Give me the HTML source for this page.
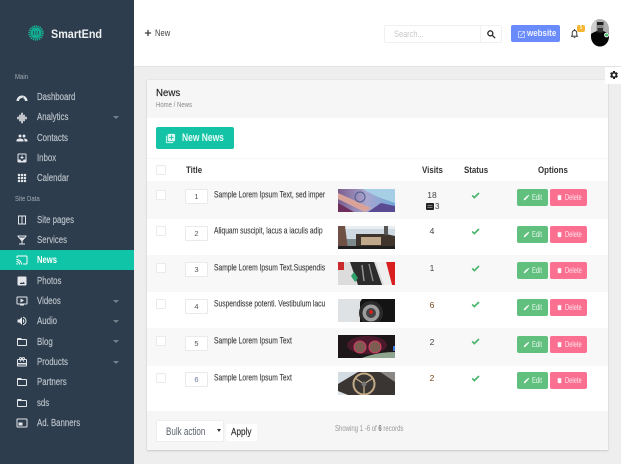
<!DOCTYPE html>
<html><head><meta charset="utf-8"><title>SmartEnd News</title>
<style>
html,body{margin:0;padding:0}
body{width:621px;height:464px;overflow:hidden;position:relative;background:#eee;font-family:"Liberation Sans",sans-serif}
div,span,svg{position:absolute;box-sizing:border-box}
.t{white-space:nowrap;transform-origin:0 50%;line-height:12px;height:12px}
.m{font-size:9.8px;color:#bcc4cb;left:37px;transform:translateY(1px) scaleX(.8);-webkit-text-stroke:.15px #bcc4cb}
.h{font-size:7.5px;color:#a3adb6;left:15px;transform:scaleX(.8)}
.i{fill:#e4e7ea;left:15.5px;width:12px;height:12px;margin-top:.5px}
.ar{left:113px;width:0;height:0;border:3px solid transparent;border-top:3px solid #75818d;border-bottom:0}
.row{left:147px;width:461px}
.s{background:#f8f8f8}
.cb{left:156px;width:10px;height:10px;background:#fff;border:1px solid #ebebeb;border-radius:1px}
.n{left:185px;width:23px;height:15px;background:#fff;border:1px solid #eaeaea;border-radius:1px;font-size:7.5px;color:#555;text-align:center;line-height:14px}
.ti{left:214px;font-size:9.6px;color:#3a3a3a;transform:translateY(.5px) scaleX(.7);-webkit-text-stroke:.12px #3a3a3a}
.th{left:338px;width:57px;height:23px}
.v{font-size:8.5px;color:#444;text-align:center;width:30px;left:417px;line-height:10px}
.ck{left:471px;width:9px;height:9px;fill:#46b56a}
.e{left:517px;width:31px;height:17px;background:#61c07e;border-radius:2px}
.d{left:550px;width:37px;height:17px;background:#fb6f91;border-radius:2px}
.bt{font-size:8.5px;color:#e9f7ee;transform:scaleX(.68);line-height:17px;height:17px}
.hd{font-size:9.2px;font-weight:bold;color:#333;top:164px;transform:scaleX(.86)}
</style></head>
<body>
<div style="left:0;top:0;width:134px;height:464px;background:#2e3d4d"></div>
<div style="left:134px;top:0;width:487px;height:67px;background:#fff;border-bottom:1px solid #e2e2e2"></div>

<svg style="left:28px;top:25px;width:16px;height:16px" viewBox="0 0 16 16"><circle cx="8" cy="8" r="6.8" fill="none" stroke="#16b89c" stroke-width="1.7" stroke-dasharray="1.3 .8"/><circle cx="8" cy="8" r="5.6" fill="#12ab92"/><path d="M5.5 6v4M8 6v4M10.5 6v4" stroke="#2b5a60" stroke-width=".9"/></svg>
<div class="t" style="left:51px;top:27.5px;font-size:12px;font-weight:bold;color:#eef0f2;transform:scaleX(.9)">SmartEnd</div>

<div class="t h" style="top:71px">Main</div>
<svg class="i" style="top:91px" viewBox="0 0 24 24"><path d="M1 18a11 11 0 0 1 22 0h-5a6 6 0 0 0-12 0z"/><path d="M11 18l3-9 1 1-2 9z" fill="#2e3d4d"/></svg>
<div class="t m" style="top:91px">Dashboard</div>
<svg class="i" style="top:111px" viewBox="0 0 24 24"><path d="M7 18h2V6H7v12zm4 4h2V2h-2v20zm-8-8h2v-4H3v4zm12 4h2V6h-2v12zm4-8v4h2v-4h-2z" stroke="#e4e7ea" stroke-width="1.2"/></svg>
<div class="t m" style="top:111px">Analytics</div><div class="ar" style="top:116px"></div>
<svg class="i" style="top:131px" viewBox="0 0 24 24"><path d="M16 11c1.66 0 2.99-1.34 2.99-3S17.66 5 16 5c-1.66 0-3 1.34-3 3s1.34 3 3 3zm-8 0c1.66 0 2.99-1.34 2.99-3S9.66 5 8 5C6.34 5 5 6.34 5 8s1.34 3 3 3zm0 2c-2.33 0-7 1.17-7 3.5V19h14v-2.5c0-2.33-4.67-3.5-7-3.5zm8 0c-.29 0-.62.02-.97.05 1.16.84 1.97 1.97 1.97 3.45V19h6v-2.5c0-2.33-4.67-3.5-7-3.5z"/></svg>
<div class="t m" style="top:131.5px">Contacts</div>
<svg class="i" style="top:151.5px" viewBox="0 0 24 24"><path d="M19 3H5c-1.1 0-2 .9-2 2v14c0 1.1.9 2 2 2h14c1.1 0 2-.9 2-2V5c0-1.1-.9-2-2-2zm0 12h-4c0 1.66-1.35 3-3 3s-3-1.34-3-3H5V5h14v10zm-3-5h-3V7h-2v3H8l4 4 4-4z"/></svg>
<div class="t m" style="top:152px">Inbox</div>
<svg class="i" style="top:171.5px" viewBox="0 0 24 24"><path d="M4 8h4V4H4v4zm6 12h4v-4h-4v4zm-6 0h4v-4H4v4zm0-6h4v-4H4v4zm6 0h4v-4h-4v4zm6-10v4h4V4h-4zm-6 4h4V4h-4v4zm6 6h4v-4h-4v4zm0 6h4v-4h-4v4z" stroke="#e4e7ea" stroke-width=".5"/></svg>
<div class="t m" style="top:172px">Calendar</div>

<div class="t h" style="top:193px">Site Data</div>
<svg class="i" style="top:213px" viewBox="0 0 24 24"><path d="M4 3h16v18H4zM6 5v14h5V5zm7 0v14h5V5z" fill-rule="evenodd"/></svg>
<div class="t m" style="top:213.5px">Site pages</div>
<svg class="i" style="top:233.5px" viewBox="0 0 24 24"><path d="M21 5V3H3v2l8 9v5H6v2h12v-2h-5v-5l8-9zM7.43 7L5.66 5h12.69l-1.78 2H7.43z"/></svg>
<div class="t m" style="top:234px">Services</div>

<div style="left:0;top:250px;width:134px;height:20px;background:#0fc4a7"></div>
<svg class="i" style="top:253.5px;fill:#fff" viewBox="0 0 24 24"><path d="M21 3H3c-1.1 0-2 .9-2 2v3h2V5h18v14h-7v2h7c1.1 0 2-.9 2-2V5c0-1.1-.9-2-2-2zM1 18v3h3c0-1.66-1.34-3-3-3zm0-4v2c2.76 0 5 2.24 5 5h2c0-3.87-3.13-7-7-7zm0-4v2c4.97 0 9 4.03 9 9h2c0-6.08-4.93-11-11-11z"/></svg>
<div class="t m" style="top:254px;color:#fff;font-weight:bold;transform:translateY(1px) scaleX(.78);-webkit-text-stroke:0">News</div>

<svg class="i" style="top:274px" viewBox="0 0 24 24"><path fill-rule="evenodd" d="M5 3h14a2 2 0 0 1 2 2v14a2 2 0 0 1-2 2H5a2 2 0 0 1-2-2V5a2 2 0 0 1 2-2zm3 13v2h9v-2l-2-2-2 2-1-1z"/></svg>
<div class="t m" style="top:274.5px">Photos</div>
<svg class="i" style="top:294.5px" viewBox="0 0 24 24"><path d="M21 3H3c-1.11 0-2 .89-2 2v12c0 1.1.89 2 2 2h5v2h8v-2h5c1.1 0 1.99-.9 1.99-2L23 5c0-1.11-.9-2-2-2zm0 14H3V5h18v12zm-5-6l-7 4V7z"/></svg>
<div class="t m" style="top:295px">Videos</div><div class="ar" style="top:300px"></div>
<svg class="i" style="top:314.5px" viewBox="0 0 24 24"><path d="M3 9v6h4l5 5V4L7 9H3zm13.5 3c0-1.77-1.02-3.29-2.5-4.03v8.05c1.48-.73 2.5-2.25 2.5-4.02zM14 3.23v2.06c2.89.86 5 3.54 5 6.71s-2.11 5.85-5 6.71v2.06c4.01-.91 7-4.49 7-8.77s-2.99-7.86-7-8.77z"/></svg>
<div class="t m" style="top:315px">Audio</div><div class="ar" style="top:320px"></div>
<svg class="i" style="top:335px" viewBox="0 0 24 24"><path d="M20 6h-8l-2-2H4c-1.1 0-1.99.9-1.99 2L2 18c0 1.1.9 2 2 2h16c1.1 0 2-.9 2-2V8c0-1.1-.9-2-2-2zm0 12H4V8h16v10z"/></svg>
<div class="t m" style="top:335.5px">Blog</div><div class="ar" style="top:340px"></div>
<svg class="i" style="top:355.5px" viewBox="0 0 24 24"><path d="M20 6h-2.18c.11-.31.18-.65.18-1 0-1.66-1.34-3-3-3-1.05 0-1.96.54-2.5 1.35l-.5.67-.5-.68C10.96 2.54 10.05 2 9 2 7.34 2 6 3.34 6 5c0 .35.07.69.18 1H4c-1.11 0-1.99.89-1.99 2L2 19c0 1.11.89 2 2 2h16c1.11 0 2-.89 2-2V8c0-1.11-.89-2-2-2zm-5-2c.55 0 1 .45 1 1s-.45 1-1 1-1-.45-1-1 .45-1 1-1zM9 4c.55 0 1 .45 1 1s-.45 1-1 1-1-.45-1-1 .45-1 1-1zm11 15H4v-2h16v2zm0-5H4V8h5.08L7 10.83 8.62 12 11 8.76l1-1.36 1 1.36L15.38 12 17 10.83 14.92 8H20v6z"/></svg>
<div class="t m" style="top:356px">Products</div><div class="ar" style="top:361px"></div>
<svg class="i" style="top:375.5px" viewBox="0 0 24 24"><path d="M20 6h-8l-2-2H4c-1.1 0-1.99.9-1.99 2L2 18c0 1.1.9 2 2 2h16c1.1 0 2-.9 2-2V8c0-1.1-.9-2-2-2zm0 12H4V8h16v10z"/></svg>
<div class="t m" style="top:376px">Partners</div>
<svg class="i" style="top:396px" viewBox="0 0 24 24"><path d="M20 6h-8l-2-2H4c-1.1 0-1.99.9-1.99 2L2 18c0 1.1.9 2 2 2h16c1.1 0 2-.9 2-2V8c0-1.1-.9-2-2-2zm0 12H4V8h16v10z"/></svg>
<div class="t m" style="top:396.5px">sds</div>
<svg class="i" style="top:416.5px" viewBox="0 0 24 24"><path transform="matrix(-1 0 0 1 24 0)" d="M19 11h-8v6h8v-6zm4 8V4.98C23 3.88 22.1 3 21 3H3c-1.1 0-2 .88-2 1.98V19c0 1.1.9 2 2 2h18c1.1 0 2-.9 2-2zm-2 .02H3V4.97h18v14.05z"/></svg>
<div class="t m" style="top:417px">Ad. Banners</div>

<svg style="left:143px;top:28px;width:10px;height:10px;fill:#333" viewBox="0 0 24 24"><path d="M19 13h-6v6h-2v-6H5v-2h6V5h2v6h6v2z" stroke="#333"/></svg>
<div class="t" style="left:155px;top:28px;font-size:9.5px;color:#444;transform:scaleX(.8)">New</div>

<div style="left:384px;top:25px;width:118px;height:18px;background:#fff;border:1px solid #f0f0f0;border-radius:2px"></div>
<div style="left:480px;top:25px;width:1px;height:18px;background:#f0f0f0"></div>
<div class="t" style="left:394px;top:29px;font-size:9.5px;color:#c8c8c8;transform:scaleX(.78)">Search...</div>
<svg style="left:486px;top:29px;width:11px;height:11px;fill:#222" viewBox="0 0 24 24"><path d="M15.5 14h-.79l-.28-.27C15.41 12.59 16 11.11 16 9.5 16 5.91 13.09 3 9.5 3S3 5.91 3 9.5 5.91 16 9.5 16c1.61 0 3.09-.59 4.23-1.57l.27.28v.79l5 4.99L20.49 19l-4.99-5zm-6 0C7.01 14 5 11.99 5 9.5S7.01 5 9.5 5 14 7.01 14 9.5 11.99 14 9.5 14z" stroke="#222" stroke-width=".8"/></svg>

<div style="left:511px;top:25px;width:49px;height:17px;background:#6a8bfb;border-radius:2px"></div>
<svg style="left:517px;top:30px;width:9px;height:9px;fill:#dfe6ff" viewBox="0 0 24 24"><path d="M19 19H5V5h7V3H5c-1.11 0-2 .9-2 2v14c0 1.1.89 2 2 2h14c1.1 0 2-.9 2-2v-7h-2v7zM14 3v2h3.59l-9.83 9.83 1.41 1.41L19 6.41V10h2V3h-7z"/></svg>
<div class="t" style="left:527px;top:28px;font-size:9.5px;font-weight:bold;color:#eef2ff;transform:scaleX(.84)">website</div>

<svg style="left:569px;top:28px;width:11px;height:11px;fill:#333" viewBox="0 0 24 24"><path d="M12 22c1.1 0 2-.9 2-2h-4c0 1.1.9 2 2 2zm6-6v-5c0-3.07-1.63-5.64-4.5-6.32V4c0-.83-.67-1.5-1.5-1.5s-1.5.67-1.5 1.5v.68C7.64 5.36 6 7.92 6 11v5l-2 2v1h16v-1l-2-2zm-2 1H8v-6c0-2.48 1.51-4.5 4-4.5s4 2.02 4 4.5v6z"/></svg>
<div style="left:577px;top:25px;width:8px;height:7px;background:#f5b731;border-radius:2px;color:#fff;font-size:5px;text-align:center;line-height:7px">5</div>

<svg style="left:591px;top:19px;width:19px;height:28px" viewBox="0 0 19 28"><defs><clipPath id="av"><rect x="0" y="0" width="18" height="27.5" rx="9" ry="10"/></clipPath></defs><g clip-path="url(#av)"><rect width="19" height="28" fill="#b0b0b0"/><rect x="0" y="0" width="5" height="28" fill="#cfcfcf"/><path d="M0 28V15q3-2 6-3h6q3 1 7 3v13z" fill="#060606"/><rect x="6" y="3.5" width="6.5" height="10" rx="3" fill="#8a8a8a"/><rect x="6" y="3" width="6.5" height="3" fill="#222"/><path d="M6.5 9h5.5v4.5H6.5z" fill="#333"/></g><circle cx="15.5" cy="16" r="2.4" fill="#fff"/><circle cx="15.5" cy="16" r="1.5" fill="#3fbf6a"/></svg>

<!-- card -->
<div style="left:147px;top:80px;width:461px;height:370px;background:#fff;box-shadow:0 1px 2px rgba(0,0,0,.14),0 0 1px rgba(0,0,0,.1)"></div>
<div style="left:147px;top:80px;width:461px;height:38px;background:#f6f6f6"></div>
<div style="left:605px;top:67px;width:16px;height:17px;background:#fff"></div>
<svg style="left:609px;top:70px;width:10px;height:10px;fill:#222" viewBox="0 0 24 24"><path d="M19.14 12.94c.04-.3.06-.61.06-.94 0-.32-.02-.64-.07-.94l2.03-1.58c.18-.14.23-.41.12-.61l-1.92-3.32c-.12-.22-.37-.29-.59-.22l-2.39.96c-.5-.38-1.03-.7-1.62-.94l-.36-2.54c-.04-.24-.24-.41-.48-.41h-3.84c-.24 0-.43.17-.47.41l-.36 2.54c-.59.24-1.13.57-1.62.94l-2.39-.96c-.22-.08-.47 0-.59.22L2.74 8.87c-.12.21-.08.47.12.61l2.03 1.58c-.05.3-.09.63-.09.94s.02.64.07.94l-2.03 1.58c-.18.14-.23.41-.12.61l1.92 3.32c.12.22.37.29.59.22l2.39-.96c.5.38 1.03.7 1.62.94l.36 2.54c.05.24.24.41.48.41h3.84c.24 0 .44-.17.47-.41l.36-2.54c.59-.24 1.13-.56 1.62-.94l2.39.96c.22.08.47 0 .59-.22l1.92-3.32c.12-.22.07-.47-.12-.61l-2.01-1.58zM12 15.6c-1.98 0-3.6-1.62-3.6-3.6s1.62-3.6 3.6-3.6 3.6 1.62 3.6 3.6-1.62 3.6-3.6 3.6z"/></svg>

<div class="t" style="left:156px;top:87px;font-size:10.5px;color:#222;transform:scaleX(.92);-webkit-text-stroke:.15px #222">News</div>
<div class="t" style="left:156px;top:99px;font-size:7.5px;color:#888;transform:scaleX(.8)">Home / News</div>

<div style="left:156px;top:127px;width:78px;height:22px;background:#14c3a6;border-radius:2px"></div>
<svg style="left:165px;top:133px;width:11px;height:11px;fill:#d8f6f0" viewBox="0 0 24 24"><path d="M4 6H2v14c0 1.1.9 2 2 2h14v-2H4V6zm16-4H8c-1.1 0-2 .9-2 2v12c0 1.1.9 2 2 2h12c1.1 0 2-.9 2-2V4c0-1.1-.9-2-2-2zm-1 9h-4v4h-2v-4H9V9h4V5h2v4h4v2z"/></svg>
<div class="t" style="left:182px;top:132px;font-size:11px;font-weight:bold;color:#e4faf5;transform:scaleX(.77)">New News</div>

<!-- head -->
<div style="left:147px;top:158px;width:461px;height:1px;background:#f7f7f7"></div>
<div class="cb" style="top:165px"></div>
<div class="t hd" style="left:186px">Title</div>
<div class="t hd" style="left:422px">Visits</div>
<div class="t hd" style="left:464px">Status</div>
<div class="t hd" style="left:538px">Options</div>

<!-- rows bg -->
<div class="row s" style="top:181px;height:38px"></div>
<div class="row s" style="top:255px;height:37px"></div>
<div class="row s" style="top:328px;height:38px"></div>
<div class="row s" style="top:411px;height:39px;background:#f6f6f6"></div>

<!-- row 1 -->
<div class="cb" style="top:190px"></div><div class="n" style="top:189px">1</div>
<div class="t ti" style="top:189px">Sample Lorem Ipsum Text, sed imper</div>
<svg class="th" style="top:189px" viewBox="0 0 57 23"><defs><linearGradient id="g1" x1="0" y1="0" x2="1" y2="0"><stop offset="0" stop-color="#7a5d8f"/><stop offset=".5" stop-color="#a9a6cf"/><stop offset="1" stop-color="#6fa8d8"/></linearGradient></defs><rect width="57" height="23" fill="url(#g1)"/><path d="M24 0h33v14L40 8z" fill="#a6cfe6"/><path d="M0 4l33 15-6 4L0 10z" fill="#d9a39a"/><path d="M0 14l16 9H0z" fill="#6e2f5c"/><path d="M30 23h27v-6l-14-3z" fill="#5a4a92"/><circle cx="22" cy="8" r="5" fill="none" stroke="#4f5d8c"/></svg>
<div class="v" style="top:190px">18</div>
<svg style="left:426px;top:203px;width:8px;height:8px" viewBox="0 0 8 8"><rect width="8" height="7" rx="1" fill="#222"/><path d="M1.5 2.3h5M1.5 4.3h5" stroke="#bbb" stroke-width=".7"/></svg>
<div class="t" style="left:435px;top:201px;font-size:8px;color:#444">3</div>
<svg class="ck" style="top:191px" viewBox="0 0 24 24"><path d="M9 16.17L4.83 12l-1.42 1.41L9 19 21 7l-1.41-1.41z" stroke="#46b56a" stroke-width="2.5"/></svg>
<div class="e" style="top:189px"></div><div class="d" style="top:189px"></div>
<svg style="left:523px;top:194px;width:7px;height:7px;fill:#fff" viewBox="0 0 24 24"><path d="M3 17.25V21h3.75L17.81 9.94l-3.75-3.75L3 17.25zM20.71 7.04c.39-.39.39-1.02 0-1.41l-2.34-2.34c-.39-.39-1.02-.39-1.41 0l-1.83 1.83 3.75 3.75 1.83-1.83z"/></svg>
<div class="t bt" style="left:532px;top:189px">Edit</div>
<svg style="left:556px;top:194px;width:7px;height:7px;fill:#fff" viewBox="0 0 24 24"><path d="M6 19c0 1.1.9 2 2 2h8c1.1 0 2-.9 2-2V7H6v12zM19 4h-3.5l-1-1h-5l-1 1H5v2h14V4z"/></svg>
<div class="t bt" style="left:565px;top:189px;color:#ffe6ec">Delete</div>

<!-- row 2 -->
<div class="cb" style="top:226px"></div><div class="n" style="top:226px">2</div>
<div class="t ti" style="top:225px">Aliquam suscipit, lacus a iaculis adip</div>
<svg class="th" style="top:226px" viewBox="0 0 57 23"><rect width="57" height="23" fill="#cfd9e2"/><rect y="0" width="57" height="3" fill="#e8edf1"/><path d="M0 13h22v10H0z" fill="#7c8a8c"/><path d="M0 0h7l3 23H0z" fill="#6e5144"/><path d="M18 8h30l9 2v13H18z" fill="#40352c"/><path d="M23 11h20v8H23z" fill="#c0a98a"/><path d="M46 0h4v9h-4z" fill="#555"/><path d="M0 20h57v3H0z" fill="#1f1f1f"/></svg>
<div class="v" style="top:226px">4</div>
<svg class="ck" style="top:227px" viewBox="0 0 24 24"><path d="M9 16.17L4.83 12l-1.42 1.41L9 19 21 7l-1.41-1.41z" stroke="#46b56a" stroke-width="2.5"/></svg>
<div class="e" style="top:226px"></div><div class="d" style="top:226px"></div>
<svg style="left:523px;top:231px;width:7px;height:7px;fill:#fff" viewBox="0 0 24 24"><path d="M3 17.25V21h3.75L17.81 9.94l-3.75-3.75L3 17.25zM20.71 7.04c.39-.39.39-1.02 0-1.41l-2.34-2.34c-.39-.39-1.02-.39-1.41 0l-1.83 1.83 3.75 3.75 1.83-1.83z"/></svg>
<div class="t bt" style="left:532px;top:226px">Edit</div>
<svg style="left:556px;top:231px;width:7px;height:7px;fill:#fff" viewBox="0 0 24 24"><path d="M6 19c0 1.1.9 2 2 2h8c1.1 0 2-.9 2-2V7H6v12zM19 4h-3.5l-1-1h-5l-1 1H5v2h14V4z"/></svg>
<div class="t bt" style="left:565px;top:226px;color:#ffe6ec">Delete</div>

<!-- row 3 -->
<div class="cb" style="top:263px"></div><div class="n" style="top:262px">3</div>
<div class="t ti" style="top:262px">Sample Lorem Ipsum Text.Suspendis</div>
<svg class="th" style="top:262px" viewBox="0 0 57 23"><rect width="57" height="23" fill="#dcdcdc"/><path d="M0 0h6v8H0z" fill="#cc2a2a"/><path d="M12 0h24l8 23H20z" fill="#2c2c2c"/><path d="M16 10l4 6-3 4-4-6z" fill="#2ea06a"/><path d="M24 3l2 16" stroke="#999" stroke-width="1.4"/><path d="M31 2l4 17" stroke="#888" stroke-width="1.4"/><path d="M48 0h9v23h-3z" fill="#d91f1f"/><path d="M38 0h10l6 23h-8z" fill="#efefef"/></svg>
<div class="v" style="top:263px">1</div>
<svg class="ck" style="top:264px" viewBox="0 0 24 24"><path d="M9 16.17L4.83 12l-1.42 1.41L9 19 21 7l-1.41-1.41z" stroke="#46b56a" stroke-width="2.5"/></svg>
<div class="e" style="top:262px"></div><div class="d" style="top:262px"></div>
<svg style="left:523px;top:267px;width:7px;height:7px;fill:#fff" viewBox="0 0 24 24"><path d="M3 17.25V21h3.75L17.81 9.94l-3.75-3.75L3 17.25zM20.71 7.04c.39-.39.39-1.02 0-1.41l-2.34-2.34c-.39-.39-1.02-.39-1.41 0l-1.83 1.83 3.75 3.75 1.83-1.83z"/></svg>
<div class="t bt" style="left:532px;top:262px">Edit</div>
<svg style="left:556px;top:267px;width:7px;height:7px;fill:#fff" viewBox="0 0 24 24"><path d="M6 19c0 1.1.9 2 2 2h8c1.1 0 2-.9 2-2V7H6v12zM19 4h-3.5l-1-1h-5l-1 1H5v2h14V4z"/></svg>
<div class="t bt" style="left:565px;top:262px;color:#ffe6ec">Delete</div>

<!-- row 4 -->
<div class="cb" style="top:299px"></div><div class="n" style="top:299px">4</div>
<div class="t ti" style="top:298px">Suspendisse potenti. Vestibulum lacu</div>
<svg class="th" style="top:299px" viewBox="0 0 57 23"><rect width="57" height="23" fill="#dedfe0"/><path d="M22 0h35v23H22z" fill="#141414"/><path d="M0 0h24q-6 8-6 23H0z" fill="#dfe2e4"/><circle cx="33" cy="14" r="12" fill="#2a2a2a"/><circle cx="33" cy="14" r="8.5" fill="#9d9d9d"/><circle cx="33" cy="14" r="5" fill="#444"/><circle cx="33" cy="13" r="2" fill="#c22"/></svg>
<div class="v" style="top:300px;color:#7a4a1c">6</div>
<svg class="ck" style="top:300px" viewBox="0 0 24 24"><path d="M9 16.17L4.83 12l-1.42 1.41L9 19 21 7l-1.41-1.41z" stroke="#46b56a" stroke-width="2.5"/></svg>
<div class="e" style="top:299px"></div><div class="d" style="top:299px"></div>
<svg style="left:523px;top:304px;width:7px;height:7px;fill:#fff" viewBox="0 0 24 24"><path d="M3 17.25V21h3.75L17.81 9.94l-3.75-3.75L3 17.25zM20.71 7.04c.39-.39.39-1.02 0-1.41l-2.34-2.34c-.39-.39-1.02-.39-1.41 0l-1.83 1.83 3.75 3.75 1.83-1.83z"/></svg>
<div class="t bt" style="left:532px;top:299px">Edit</div>
<svg style="left:556px;top:304px;width:7px;height:7px;fill:#fff" viewBox="0 0 24 24"><path d="M6 19c0 1.1.9 2 2 2h8c1.1 0 2-.9 2-2V7H6v12zM19 4h-3.5l-1-1h-5l-1 1H5v2h14V4z"/></svg>
<div class="t bt" style="left:565px;top:299px;color:#ffe6ec">Delete</div>

<!-- row 5 -->
<div class="cb" style="top:336px"></div><div class="n" style="top:336px">5</div>
<div class="t ti" style="top:335px">Sample Lorem Ipsum Text</div>
<svg class="th" style="top:335px" viewBox="0 0 57 23"><rect width="57" height="23" fill="#1d1719"/><ellipse cx="29" cy="10" rx="20" ry="9" fill="#4a1a2c"/><circle cx="22" cy="12" r="6" fill="#7d5c52" stroke="#d63a64"/><circle cx="37" cy="12" r="6" fill="#7d5c52" stroke="#d63a64"/><path d="M24 23q15-6 33-6v6z" fill="#8fa58f"/><rect x="55" y="11" width="2" height="5" fill="#3a78d8"/></svg>
<div class="v" style="top:337px">2</div>
<svg class="ck" style="top:337px" viewBox="0 0 24 24"><path d="M9 16.17L4.83 12l-1.42 1.41L9 19 21 7l-1.41-1.41z" stroke="#46b56a" stroke-width="2.5"/></svg>
<div class="e" style="top:336px"></div><div class="d" style="top:336px"></div>
<svg style="left:523px;top:341px;width:7px;height:7px;fill:#fff" viewBox="0 0 24 24"><path d="M3 17.25V21h3.75L17.81 9.94l-3.75-3.75L3 17.25zM20.71 7.04c.39-.39.39-1.02 0-1.41l-2.34-2.34c-.39-.39-1.02-.39-1.41 0l-1.83 1.83 3.75 3.75 1.83-1.83z"/></svg>
<div class="t bt" style="left:532px;top:336px">Edit</div>
<svg style="left:556px;top:341px;width:7px;height:7px;fill:#fff" viewBox="0 0 24 24"><path d="M6 19c0 1.1.9 2 2 2h8c1.1 0 2-.9 2-2V7H6v12zM19 4h-3.5l-1-1h-5l-1 1H5v2h14V4z"/></svg>
<div class="t bt" style="left:565px;top:336px;color:#ffe6ec">Delete</div>

<!-- row 6 -->
<div class="cb" style="top:373px"></div><div class="n" style="top:372px;color:#6a7a9a">6</div>
<div class="t ti" style="top:372px">Sample Lorem Ipsum Text</div>
<svg class="th" style="top:372px" viewBox="0 0 57 23"><rect width="57" height="23" fill="#3a3533"/><path d="M0 0h20L0 12z" fill="#d3dce2"/><path d="M0 19l10 4H0z" fill="#dfe4e8"/><path d="M42 0h15v10z" fill="#8a8785"/><circle cx="26" cy="12" r="10.5" fill="#3a3634" stroke="#c4ab85" stroke-width="2"/><path d="M26 12L17 6M26 12l9-6M26 12v10" stroke="#c4ab85" stroke-width="1.3"/><circle cx="26" cy="12" r="2.5" fill="#777"/></svg>
<div class="v" style="top:373px;color:#7a4a1c">2</div>
<svg class="ck" style="top:374px" viewBox="0 0 24 24"><path d="M9 16.17L4.83 12l-1.42 1.41L9 19 21 7l-1.41-1.41z" stroke="#46b56a" stroke-width="2.5"/></svg>
<div class="e" style="top:372px"></div><div class="d" style="top:372px"></div>
<svg style="left:523px;top:377px;width:7px;height:7px;fill:#fff" viewBox="0 0 24 24"><path d="M3 17.25V21h3.75L17.81 9.94l-3.75-3.75L3 17.25zM20.71 7.04c.39-.39.39-1.02 0-1.41l-2.34-2.34c-.39-.39-1.02-.39-1.41 0l-1.83 1.83 3.75 3.75 1.83-1.83z"/></svg>
<div class="t bt" style="left:532px;top:372px">Edit</div>
<svg style="left:556px;top:377px;width:7px;height:7px;fill:#fff" viewBox="0 0 24 24"><path d="M6 19c0 1.1.9 2 2 2h8c1.1 0 2-.9 2-2V7H6v12zM19 4h-3.5l-1-1h-5l-1 1H5v2h14V4z"/></svg>
<div class="t bt" style="left:565px;top:372px;color:#ffe6ec">Delete</div>

<!-- footer -->
<div style="left:156px;top:420px;width:68px;height:22px;background:#fff;border:1px solid #eee;border-radius:1px"></div>
<div class="t" style="left:166px;top:426px;font-size:11px;color:#565d68;transform:scaleX(.73)">Bulk action</div>
<div style="left:217px;top:429px;width:0;height:0;border:2.5px solid transparent;border-top:3px solid #333;border-bottom:0"></div>
<div style="left:226px;top:424px;width:31px;height:17px;background:#fff;border-radius:1px"></div>
<div class="t" style="left:231px;top:427px;font-size:10px;color:#333;transform:scaleX(.82);-webkit-text-stroke:.2px #333">Apply</div>
<div class="t" style="left:335px;top:423px;font-size:7.8px;color:#999;transform:scaleX(.77)">Showing 1 -6 of <b style="color:#777">6</b> records</div>
</body></html>
